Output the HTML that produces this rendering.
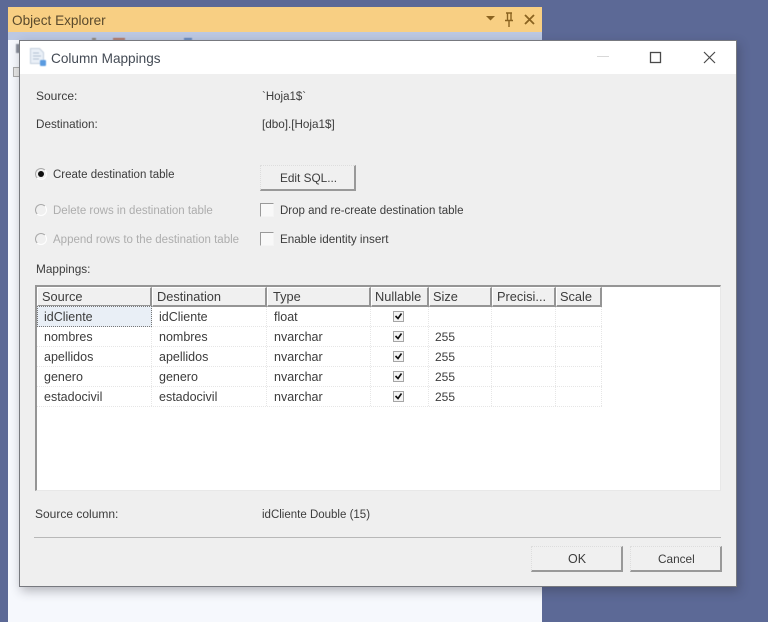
<!DOCTYPE html>
<html><head><meta charset="utf-8"><style>
html,body{margin:0;padding:0;width:768px;height:622px;overflow:hidden;background:#5c6996;font-family:"Liberation Sans",sans-serif;}
div,span{position:absolute;box-sizing:border-box}
.t{font-size:12px;line-height:14px;height:14px;color:#3c3c3c;white-space:nowrap;filter:blur(.35px)}
.s{font-size:11.500px}
.g{color:#adadad}
.h{top:287px;height:20px;background:#f0f0f0;border-right:2px solid #959595;border-bottom:2px solid #959595;border-left:1px solid #fff;border-top:1px solid #fff;filter:blur(.3px)}
.btn{background:#f0f0f0;border-right:2px solid #999;border-bottom:2px solid #999;border-top:1px dotted #ddd;border-left:1px dotted #ddd;filter:blur(.3px)}
.cb{width:14px;height:14px;background:#f8f8f8;border:1px solid #999;border-right-color:#f4f4f4;border-bottom-color:#f4f4f4;filter:blur(.3px)}
.rd{width:12px;height:12px;border-radius:50%;border:1.500px solid #a8a8a8;border-right-color:#fff;border-bottom-color:#fff;background:#f0f0f0;filter:blur(.3px)}
.m{font-size:12.500px}
.k{font-size:12.800px;top:290px}
</style></head><body>
<div style="left:8px;top:7px;width:534px;height:615px;background:#f6f8fd"></div>
<div style="left:8px;top:7px;width:534px;height:25px;background:#f8cf83"></div>
<div style="left:8px;top:32px;width:534px;height:8px;background:#bcc8e2"></div>
<div class="t" style="left:12px;top:13px;font-size:13.600px;line-height:16px;height:16px;color:#5a4a2c">Object Explorer</div>
<svg style="position:absolute;left:480px;top:10px;filter:blur(.3px)" width="60" height="18" viewBox="0 0 60 18">
<path d="M6 6h9l-4.500 4.500z" fill="#8a6320"/>
<path d="M26 3h6M27.500 3v7M31 3v7M25 10.500h8M29 11v6" fill="none" stroke="#8a6320" stroke-width="1.400"/>
<path d="M45 5l9 9M54 5l-9 9" stroke="#8a6320" stroke-width="1.800"/>
</svg>
<div style="left:92px;top:38px;width:4px;height:2px;background:#8a8070;filter:blur(.5px)"></div>
<div style="left:113px;top:38px;width:12px;height:2px;background:#b0705c;filter:blur(.5px)"></div>
<div style="left:184px;top:38px;width:8px;height:2px;background:#5a7fb8;filter:blur(.5px)"></div>
<div style="left:13px;top:67px;width:7px;height:10px;background:#e6e6e6;border:1px solid #aaa"></div>
<div style="left:16px;top:44px;width:4px;height:9px;background:#8a8f9c;filter:blur(.6px)"></div>

<div style="left:19px;top:40px;width:718px;height:547px;background:#efefef;border:1px solid #77797f;box-shadow:2px 4px 10px rgba(40,40,50,.32)"></div>
<div style="left:20px;top:41px;width:716px;height:33px;background:#fff"></div>

<svg style="position:absolute;left:28px;top:47px;filter:blur(.4px)" width="20" height="20" viewBox="0 0 20 20">
<path d="M2.500 1.500h9l4 4v11h-13z" fill="#eaf0f7" stroke="#c4d0de"/>
<path d="M5 6h6M5 9h8M5 12h6" stroke="#b0c0d2"/>
<rect x="12" y="13" width="6" height="6" rx="1" fill="#5a9be0"/>
</svg>
<div class="t" style="left:51px;top:51px;font-size:13.600px;line-height:16px;height:16px;color:#444b55">Column Mappings</div>

<svg style="position:absolute;left:590px;top:46px;filter:blur(.25px)" width="135" height="24" viewBox="0 0 135 24">
<path d="M7 10.500h12" stroke="#d8d8d8"/>
<rect x="60.500" y="6.500" width="10" height="10" fill="none" stroke="#4a4a4a" stroke-width="1.300"/>
<path d="M114 6l11 11M125 6l-11 11" stroke="#4a4a4a" stroke-width="1.200"/>
</svg>

<div class="t" style="left:36px;top:89px">Source:</div>
<div class="t s" style="left:262px;top:90px">`Hoja1$`</div>
<div class="t" style="left:36px;top:118px;font-size:11.700px">Destination:</div>
<div class="t" style="left:262px;top:118px;font-size:11.700px">[dbo].[Hoja1$]</div>

<div class="rd" style="left:35px;top:168px"></div>
<div style="left:38px;top:171px;width:6px;height:6px;border-radius:50%;background:#111;filter:blur(.3px)"></div>
<div class="t s" style="left:53px;top:168px">Create destination table</div>
<div class="rd" style="left:35px;top:204px"></div>
<div class="t g s" style="left:53px;top:204px">Delete rows in destination table</div>
<div class="rd" style="left:35px;top:233px"></div>
<div class="t g s" style="left:53px;top:233px">Append rows to the destination table</div>

<div class="btn" style="left:260px;top:165px;width:96px;height:26px"></div>
<div class="t" style="left:280px;top:171px;font-size:11.800px">Edit SQL...</div>
<div class="cb" style="left:260px;top:203px"></div>
<div class="t s" style="left:280px;top:204px">Drop and re-create destination table</div>
<div class="cb" style="left:260px;top:232px"></div>
<div class="t" style="left:280px;top:233px;font-size:11.700px">Enable identity insert</div>

<div class="t" style="left:36px;top:262px;font-size:11.800px">Mappings:</div>

<div style="left:35px;top:285px;width:686px;height:206px;background:#fff;border-top:2px solid #959595;border-left:2px solid #959595;border-right:1px solid #e8e8e8;border-bottom:1px solid #e8e8e8"></div>

<div class="h" style="left:37px;width:115px"></div>
<div class="h" style="left:152px;width:115px"></div>
<div class="h" style="left:267px;width:104px"></div>
<div class="h" style="left:371px;width:58px"></div>
<div class="h" style="left:429px;width:63px"></div>
<div class="h" style="left:492px;width:64px"></div>
<div class="h" style="left:556px;width:46px"></div>
<div class="t k" style="left:42px">Source</div>
<div class="t k" style="left:157px">Destination</div>
<div class="t k" style="left:273px">Type</div>
<div class="t k" style="left:375px">Nullable</div>
<div class="t k" style="left:433px">Size</div>
<div class="t k" style="left:497px">Precisi...</div>
<div class="t k" style="left:560px">Scale</div>

<svg style="position:absolute;left:0;top:0" width="768" height="622">
<g stroke="#e6e6e6" stroke-dasharray="1 1" fill="none">
<path d="M37 326.500H602M37 346.500H602M37 366.500H602M37 386.500H602M37 406.500H602"/>
<path d="M151.500 307V407M266.500 307V407M370.500 307V407M428.500 307V407M491.500 307V407M555.500 307V407M601.500 307V407"/>
</g>
</svg>
<div style="left:37px;top:306px;width:115px;height:21px;background:#e9eff6;border:1px dotted #777;filter:blur(.3px)"></div>

<div class="t m" style="left:44px;top:310px">idCliente</div>
<div class="t m" style="left:159px;top:310px">idCliente</div>
<div class="t m" style="left:274px;top:310px">float</div>
<div class="t m" style="left:44px;top:330px">nombres</div>
<div class="t m" style="left:159px;top:330px">nombres</div>
<div class="t m" style="left:274px;top:330px">nvarchar</div>
<div class="t" style="left:435px;top:330px">255</div>
<div class="t m" style="left:44px;top:350px">apellidos</div>
<div class="t m" style="left:159px;top:350px">apellidos</div>
<div class="t m" style="left:274px;top:350px">nvarchar</div>
<div class="t" style="left:435px;top:350px">255</div>
<div class="t m" style="left:44px;top:370px">genero</div>
<div class="t m" style="left:159px;top:370px">genero</div>
<div class="t m" style="left:274px;top:370px">nvarchar</div>
<div class="t" style="left:435px;top:370px">255</div>
<div class="t m" style="left:44px;top:390px">estadocivil</div>
<div class="t m" style="left:159px;top:390px">estadocivil</div>
<div class="t m" style="left:274px;top:390px">nvarchar</div>
<div class="t" style="left:435px;top:390px">255</div>

<svg style="position:absolute;left:393px;top:311px;filter:blur(.25px)" width="12" height="92" viewBox="0 0 12 92">
<defs><g id="c"><rect x=".5" y=".5" width="10" height="10" fill="#f4f4f4" stroke="#a5a5a5"/><path d="M2.500 5l2.500 2.500 3.500-5" fill="none" stroke="#111" stroke-width="1.600"/></g></defs>
<use href="#c" y="0"/><use href="#c" y="20"/><use href="#c" y="40"/><use href="#c" y="60"/><use href="#c" y="80"/>
</svg>

<div class="t" style="left:35px;top:507px">Source column:</div>
<div class="t s" style="left:262px;top:508px">idCliente Double (15)</div>
<div style="left:34px;top:537px;width:687px;height:1px;background:#b8b8b8"></div>
<div class="btn" style="left:531px;top:546px;width:92px;height:26px"></div>
<div class="t" style="left:568px;top:552px;font-size:12.500px">OK</div>
<div class="btn" style="left:630px;top:546px;width:92px;height:26px"></div>
<div class="t" style="left:658px;top:552px;font-size:11.800px">Cancel</div>
</body></html>
